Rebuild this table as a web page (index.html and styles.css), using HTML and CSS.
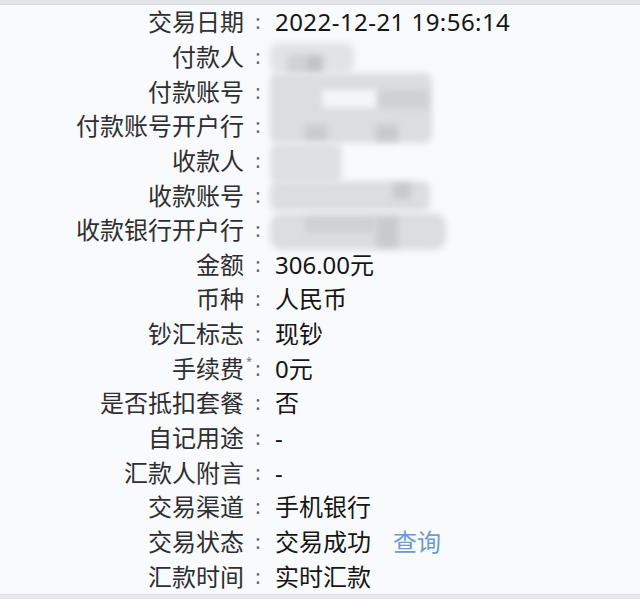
FILE: index.html
```html
<!DOCTYPE html>
<html lang="zh-CN">
<head>
<meta charset="utf-8">
<link rel="stylesheet" href="styles.css">
</head>
<body>
<div class="page">
  <div class="topbar"></div>
  <div class="sheet">
    <div class="rows">
      <div class="row"><span class="label">交易日期</span><span class="colon">:</span><span class="value num">2022-12-21 19:56:14</span></div>
      <div class="row"><span class="label">付款人</span><span class="colon">:</span><span class="value"></span></div>
      <div class="row"><span class="label">付款账号</span><span class="colon">:</span><span class="value"></span></div>
      <div class="row"><span class="label">付款账号开户行</span><span class="colon">:</span><span class="value"></span></div>
      <div class="row"><span class="label">收款人</span><span class="colon">:</span><span class="value"></span></div>
      <div class="row"><span class="label">收款账号</span><span class="colon">:</span><span class="value"></span></div>
      <div class="row"><span class="label">收款银行开户行</span><span class="colon">:</span><span class="value"></span></div>
      <div class="row"><span class="label">金额</span><span class="colon">:</span><span class="value">306.00元</span></div>
      <div class="row"><span class="label">币种</span><span class="colon">:</span><span class="value">人民币</span></div>
      <div class="row"><span class="label">钞汇标志</span><span class="colon">:</span><span class="value">现钞</span></div>
      <div class="row"><span class="label">手续费<sup class="star">*</sup></span><span class="colon">:</span><span class="value">0元</span></div>
      <div class="row"><span class="label">是否抵扣套餐</span><span class="colon">:</span><span class="value">否</span></div>
      <div class="row"><span class="label">自记用途</span><span class="colon">:</span><span class="value">-</span></div>
      <div class="row"><span class="label">汇款人附言</span><span class="colon">:</span><span class="value">-</span></div>
      <div class="row"><span class="label">交易渠道</span><span class="colon">:</span><span class="value">手机银行</span></div>
      <div class="row"><span class="label">交易状态</span><span class="colon">:</span><span class="value">交易成功<span class="link">查询</span></span></div>
      <div class="row"><span class="label">汇款时间</span><span class="colon">:</span><span class="value">实时汇款</span></div>
    </div>
    <div class="mask">
      <div class="blk b1"></div>
      <div class="blk b1d"></div>
      <div class="blk b1e"></div>
      <div class="blk b2"></div>
      <div class="blk b2w"></div>
      <div class="blk b2d1"></div>
      <div class="blk b2d2"></div>
      <div class="blk b2d3"></div>
      <div class="blk b3"></div>
      <div class="blk b4"></div>
      <div class="blk b4d"></div>
      <div class="blk b5"></div>
      <div class="blk b5d1"></div>
      <div class="blk b5d2"></div>
    </div>
  </div>
  <div class="bottombar"></div>
</div>
</body>
</html>
```

FILE: styles.css
```css
html, body {
  margin: 0;
  padding: 0;
  background: #f8fafb;
}
.page {
  width: 640px;
  height: 599px;
  overflow: hidden;
  display: flex;
  flex-direction: column;
  font-family: "Noto Sans", "Noto Sans CJK SC", sans-serif;
}
.topbar {
  height: 4px;
  flex: none;
  background: #e3e4e7;
  border-bottom: 1px solid #d9dadd;
}
.sheet {
  position: relative;
  flex: 1;
  background: #f8fafb;
}
.rows {
  display: flex;
  flex-direction: column;
}
.row {
  height: 34.65px;
  display: grid;
  grid-template-columns: 244px 28px 1fr;
  align-items: center;
  font-size: 24px;
  line-height: 1;
}
.label {
  text-align: right;
  color: #2e2e30;
  white-space: nowrap;
  position: relative;
}
.star {
  position: absolute;
  right: -8px;
  top: -2px;
  font-size: 11px;
  color: #777;
}
.colon {
  text-align: center;
  color: #666;
  font-size: 20px;
}
.value {
  padding-left: 3px;
  color: #151515;
  white-space: nowrap;
}
.num {
  letter-spacing: 0.45px;
}
.link {
  margin-left: 22px;
  color: #6b9ccf;
}
.bottombar {
  height: 6px;
  flex: none;
  background: #e7e8ec;
  border-top: 1px solid #dedfe3;
}
.mask {
  position: absolute;
  inset: 0;
  pointer-events: none;
}
.blk {
  position: absolute;
  filter: blur(3px);
  border-radius: 8px;
}
.b1 { left: 270px; top: 38px; width: 84px; height: 30px; background: #e2e3e5; }
.b1d { left: 287px; top: 50px; width: 18px; height: 18px; background: #d0d1d4; border-radius: 2px; }
.b1e { left: 305px; top: 50px; width: 18px; height: 18px; background: #c2c3c6; border-radius: 2px; }
.b2 { left: 270px; top: 68px; width: 162px; height: 70px; background: #dcdde0; }
.b2w { left: 322px; top: 85px; width: 56px; height: 18px; background: #f4f5f7; border-radius: 2px; }
.b2d1 { left: 378px; top: 85px; width: 50px; height: 18px; background: #cfd0d3; border-radius: 2px; }
.b2d2 { left: 305px; top: 120px; width: 22px; height: 16px; background: #cacbce; border-radius: 2px; }
.b2d3 { left: 376px; top: 120px; width: 22px; height: 16px; background: #c8c9cc; border-radius: 2px; }
.b3 { left: 270px; top: 138px; width: 72px; height: 40px; background: #dfe0e2; }
.b4 { left: 270px; top: 176px; width: 160px; height: 30px; background: #dcdde0; }
.b4d { left: 393px; top: 178px; width: 18px; height: 16px; background: #c8c9cc; border-radius: 2px; }
.b5 { left: 270px; top: 208px; width: 176px; height: 37px; background: #dcdde0; border-radius: 12px; }
.b5d1 { left: 305px; top: 212px; width: 70px; height: 16px; background: #cfd0d3; border-radius: 2px; }
.b5d2 { left: 376px; top: 212px; width: 22px; height: 30px; background: #c9cacd; border-radius: 2px; }
```
